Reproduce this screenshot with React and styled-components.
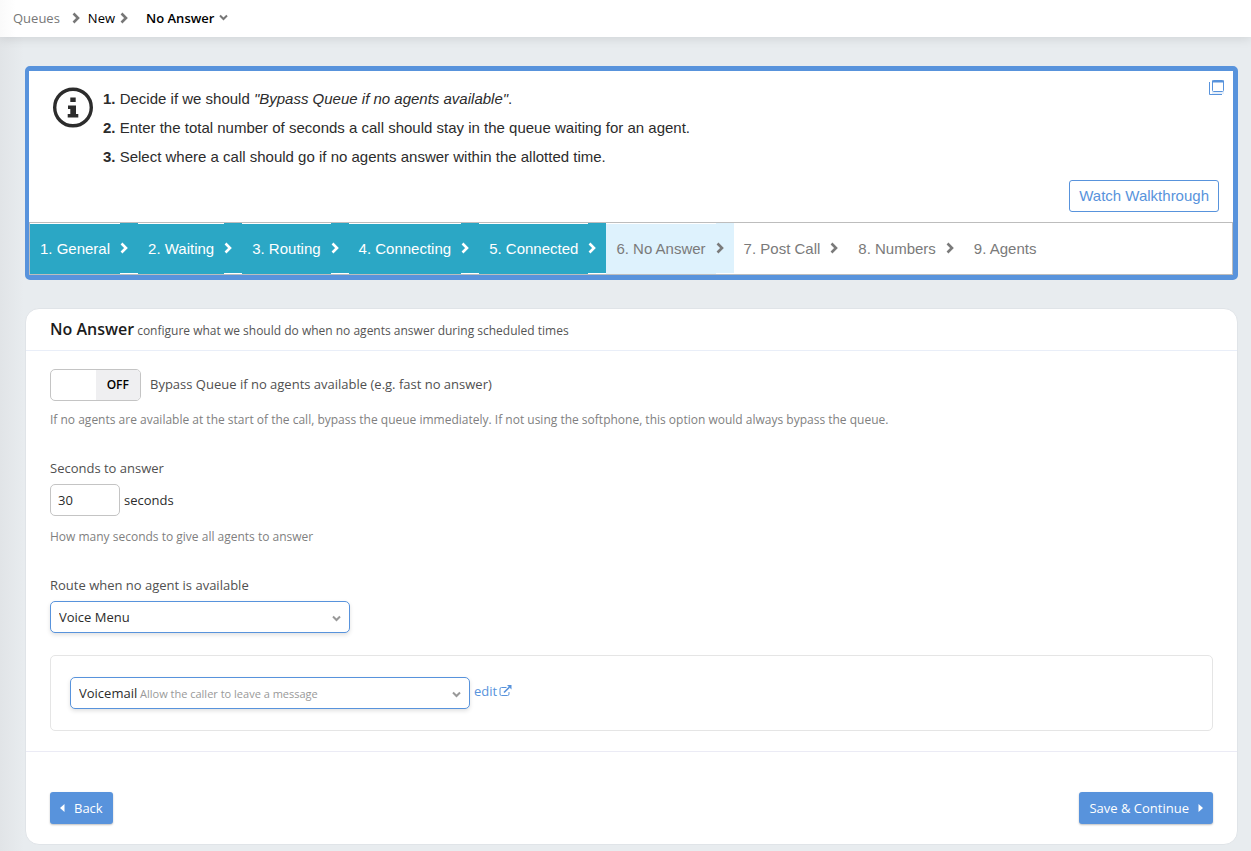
import React, { useState } from "react";
import styled, { createGlobalStyle } from "styled-components";

const blue = "#5893dc";
const teal = "#2ba7c5";
const sans = '"Open Sans", "Noto Sans", sans-serif';
const helvetica = '"Liberation Sans", Arial, sans-serif';

const GlobalStyle = createGlobalStyle`
  *, *::before, *::after { box-sizing: border-box; }
  body {
    margin: 0;
    font: 13px/20px ${sans};
    color: #2c2c2c;
    background: linear-gradient(90deg, #e1e4e7 0, #e8ecef 24px);
  }
  input, select, button { font: inherit; color: inherit; }
  h1, p, ol { margin: 0; }
`;

const Page = styled.div`
  min-height: 100vh;
  padding-bottom: 6px;
`;

const TopBar = styled.nav`
  display: flex;
  align-items: center;
  height: 37px;
  padding: 0 13px 2px;
  background: linear-gradient(90deg, #fafafa 0, #fff 16px);
  box-shadow: 0 1px 12px rgba(0, 0, 0, 0.12);
`;

const Crumb = styled.a`
  color: #777;
  text-decoration: none;
`;

const NewCrumb = styled(Crumb)`
  color: #000;
  font-weight: 500;
  margin: 0 5px 0 7px;
`;

const CurrentCrumb = styled.button`
  display: flex;
  align-items: center;
  gap: 5px;
  margin-left: 17px;
  padding: 0;
  border: 0;
  background: none;
  color: #000;
  font-weight: 600;
`;

const CrumbArrow = styled.span`
  display: flex;
  margin-left: ${(p) => p.$gap || 0}px;
  color: #777;
`;

const Main = styled.main`
  padding: 29px 13px 0 25px;
`;

const Guide = styled.section`
  border: solid ${blue};
  border-width: 5px 5px 5px 4px;
  border-radius: 5px;
  background: #fff;
  font-family: ${helvetica};
  font-size: 15px;
`;

const GuideBody = styled.div`
  display: flex;
  align-items: flex-start;
  gap: 10px;
  padding: 13px 9px 0 24px;
`;

const InfoMark = styled.svg`
  flex: none;
  margin-top: 3px;
`;

const GuideList = styled.ol`
  flex: 1;
  padding: 0;
  list-style: none;
  line-height: 29px;
`;

const IconButton = styled.button`
  display: flex;
  margin-top: -4px;
  padding: 0;
  border: 0;
  background: none;
  color: ${blue};
`;

const GuideActions = styled.div`
  display: flex;
  justify-content: flex-end;
  padding: 9px 14px 10px;
`;

const OutlineButton = styled.button`
  height: 32px;
  padding: 0 9px;
  border: 1px solid ${blue};
  border-radius: 3px;
  background: #fff;
  color: ${blue};
`;

const Steps = styled.ol`
  display: flex;
  padding: 0;
  list-style: none;
  border: 1px solid #bdbdbd;
  height: 53px;
`;

const tones = {
  done: { back: teal, ink: "#fff" },
  current: { back: "#def2fd", ink: "#7a7a7a" },
  todo: { back: "transparent", ink: "#7a7a7a" },
};

const StepItem = styled.li`
  display: flex;
  color: ${(p) => tones[p.$tone].ink};
`;

const StepLink = styled.a`
  display: flex;
  align-items: center;
  height: 50px;
  margin-top: 1px;
  padding: 0 10px;
  color: inherit;
  text-decoration: none;
  background: ${(p) => tones[p.$tone].back};
`;

const StepArrow = styled.span`
  display: flex;
  align-items: center;
  width: 18px;
  height: 50px;
  background: ${(p) => tones[p.$tone].back};
`;

const Card = styled.form`
  margin-top: 28px;
  border: 1px solid #e0e4e8;
  border-radius: 14px;
  background: #fff;
`;

const CardHeader = styled.header`
  display: flex;
  align-items: baseline;
  gap: 3px;
  height: 42px;
  padding: 8px 24px 0;
  border-bottom: 1px solid #e9eef8;
  font-size: 12px;
  line-height: 24px;
  color: #555;
`;

const Title = styled.h1`
  font-size: 16px;
  font-weight: 600;
  color: #1c1c1c;
`;

const CardBody = styled.div`
  padding: 18px 24px 20px;
`;

const Help = styled.p`
  font-size: 12px;
  color: #7f7f7f;
`;

const HelpBelow = styled(Help)`
  margin-top: 5px;
`;

const Field = styled.div`
  display: flex;
  flex-direction: column;
  gap: ${(p) => p.$gap || 6}px;
  margin-bottom: ${(p) => p.$after}px;
`;

const FieldLabel = styled.label`
  color: #505050;
`;

const Row = styled.div`
  display: flex;
  align-items: center;
  gap: 4px;
`;

const SwitchLabel = styled.label`
  display: flex;
  align-items: center;
  gap: 9px;
  color: #505050;
`;

const SwitchInput = styled.input`
  position: absolute;
  opacity: 0;
`;

const SwitchTrack = styled.span`
  display: grid;
  grid-template-columns: 1fr 1fr;
  width: 91px;
  height: 32px;
  border: 1px solid #c4c4c4;
  border-radius: 5px;
  overflow: hidden;
  background: #fff;
`;

const SwitchText = styled.span`
  grid-column: ${(p) => (p.$on ? 1 : 2)};
  background: ${(p) => (p.$on ? blue : "#efeff1")};
  color: ${(p) => (p.$on ? "#fff" : "#000")};
  font-size: 12px;
  font-weight: 600;
  line-height: 30px;
  text-align: center;
`;

const SwitchCaption = styled.span`
  padding-bottom: 2px;
`;

const NumberBox = styled.input`
  width: 70px;
  height: 32px;
  padding: 0 7px;
  border: 1px solid #c4c4c4;
  border-radius: 5px;
  background: #fff;
`;

const SelectWrap = styled.div`
  position: relative;
  width: ${(p) => p.$width}px;
  max-width: 100%;
  color: #999;
`;

const SelectBox = styled.select`
  display: block;
  width: 100%;
  height: 32px;
  padding: 0 28px 0 8px;
  appearance: none;
  border: 1px solid ${blue};
  border-radius: 5px;
  background: #fff;
  color: #2c2c2c;
  box-shadow: 0 2px 4px rgba(0, 0, 0, 0.12);
`;

const SelectArrow = styled.span`
  position: absolute;
  display: flex;
  top: 14px;
  right: 9px;
  pointer-events: none;
`;

const SelectHint = styled.span`
  position: absolute;
  top: 7px;
  left: 70px;
  font-size: 11px;
  pointer-events: none;
`;

const RouteBox = styled.div`
  display: flex;
  align-items: flex-start;
  gap: 4px;
  padding: 21px 19px;
  border: 1px solid #e5e5e5;
  border-radius: 5px;
`;

const EditLink = styled.a`
  display: flex;
  align-items: center;
  gap: 2px;
  margin-top: 4px;
  color: ${blue};
  text-decoration: none;
`;

const CardFooter = styled.footer`
  display: flex;
  justify-content: space-between;
  padding: 40px 24px 20px;
  border-top: 1px solid #ebebf5;
`;

const SolidButton = styled.button`
  display: flex;
  align-items: center;
  gap: 9px;
  height: 32px;
  padding: 0 10px;
  border: 0;
  border-radius: 3px;
  background: ${blue};
  color: #fff;
  box-shadow: 0 1px 2px rgba(0, 0, 0, 0.25);
`;

const Chevron = () => (
  <svg width="9" height="12" viewBox="0 0 9 12" fill="none" stroke="currentColor" strokeWidth="2.6" aria-hidden="true">
    <path d="M1.500 1.500 6 6l-4.500 4.500" />
  </svg>
);

const CaretDown = () => (
  <svg width="9" height="7" viewBox="0 0 9 7" fill="none" stroke="currentColor" strokeWidth="2" aria-hidden="true">
    <path d="M1 1.500 4.500 5 8 1.500" />
  </svg>
);

const InfoIcon = () => (
  <InfoMark width="40" height="41" viewBox="0 0 40 41" fill="#2c2c2c" aria-hidden="true">
    <circle cx="20" cy="20.500" r="18.300" fill="none" stroke="#2c2c2c" strokeWidth="3.400" />
    <rect x="17.300" y="10.500" width="5.400" height="4.500" />
    <path d="M15 18.500h8v8.500h2.300v3.500H14.700V27h2.600v-5H15z" />
  </InfoMark>
);

const WindowIcon = () => (
  <svg width="15" height="15" viewBox="0 0 15 15" fill="none" stroke="currentColor" aria-hidden="true">
    <path d="M.5 2v12.500H13" />
    <rect x="3.500" y=".5" width="11" height="11" rx="1" />
    <path d="M3 1.500h12" strokeWidth="2" />
    <path d="M3 13h12" opacity=".3" />
  </svg>
);

const ExternalIcon = () => (
  <svg width="13" height="12" viewBox="0 0 13 12" fill="none" stroke="currentColor" aria-hidden="true">
    <path d="M7.500 2.500H2.500a1.500 1.500 0 0 0-1.500 1.500v5a1.500 1.500 0 0 0 1.500 1.500h6A1.500 1.500 0 0 0 10 9V7" />
    <path d="M5 7.500 10.500 2" strokeWidth="1.600" />
    <path d="M8 0h4.500v4.500z" fill="currentColor" stroke="none" />
  </svg>
);

const Triangle = ({ left }) => (
  <svg width="5" height="8" viewBox="0 0 5 8" fill="currentColor" aria-hidden="true">
    <path d={left ? "M4.500 0v8L0 4z" : "M.5 0v8L5 4z"} />
  </svg>
);

const steps = [
  ["1. General", "done"],
  ["2. Waiting", "done"],
  ["3. Routing", "done"],
  ["4. Connecting", "done"],
  ["5. Connected", "done"],
  ["6. No Answer", "current"],
  ["7. Post Call", "todo"],
  ["8. Numbers", "todo"],
  ["9. Agents", "todo"],
];

export default function App() {
  const [bypass, setBypass] = useState(false);
  return (
    <Page>
      <GlobalStyle />
      <TopBar aria-label="Breadcrumb">
        <Crumb href="#queues">Queues</Crumb>
        <CrumbArrow $gap={12}><Chevron /></CrumbArrow>
        <NewCrumb href="#new">New</NewCrumb>
        <CrumbArrow><Chevron /></CrumbArrow>
        <CurrentCrumb type="button">No Answer <CrumbArrow><CaretDown /></CrumbArrow></CurrentCrumb>
      </TopBar>
      <Main>
        <Guide>
          <GuideBody>
            <InfoIcon />
            <GuideList>
              <li><b>1.</b> Decide if we should <em>"Bypass Queue if no agents available"</em>.</li>
              <li><b>2.</b> Enter the total number of seconds a call should stay in the queue waiting for an agent.</li>
              <li><b>3.</b> Select where a call should go if no agents answer within the allotted time.</li>
            </GuideList>
            <IconButton type="button" aria-label="Open in window"><WindowIcon /></IconButton>
          </GuideBody>
          <GuideActions>
            <OutlineButton type="button">Watch Walkthrough</OutlineButton>
          </GuideActions>
          <Steps>
            {steps.map(([name, tone], i) => (
              <StepItem key={name} $tone={tone}>
                <StepLink href={`#step-${i + 1}`} $tone={tone}>{name}</StepLink>
                {i < steps.length - 1 && <StepArrow $tone={tone}><Chevron /></StepArrow>}
              </StepItem>
            ))}
          </Steps>
        </Guide>
        <Card onSubmit={(e) => e.preventDefault()}>
          <CardHeader>
            <Title>No Answer</Title>
            <span>configure what we should do when no agents answer during scheduled times</span>
          </CardHeader>
          <CardBody>
            <Field $gap={9} $after={28}>
              <SwitchLabel>
                <SwitchInput type="checkbox" checked={bypass} onChange={(e) => setBypass(e.target.checked)} />
                <SwitchTrack><SwitchText $on={bypass}>{bypass ? "ON" : "OFF"}</SwitchText></SwitchTrack>
                <SwitchCaption>Bypass Queue if no agents available (e.g. fast no answer)</SwitchCaption>
              </SwitchLabel>
              <Help>If no agents are available at the start of the call, bypass the queue immediately. If not using the softphone, this option would always bypass the queue.</Help>
            </Field>
            <Field $after={28}>
              <FieldLabel htmlFor="seconds">Seconds to answer</FieldLabel>
              <Row>
                <NumberBox id="seconds" type="text" inputMode="numeric" defaultValue="30" />
                seconds
              </Row>
              <HelpBelow>How many seconds to give all agents to answer</HelpBelow>
            </Field>
            <Field $after={22}>
              <FieldLabel htmlFor="route">Route when no agent is available</FieldLabel>
              <SelectWrap $width={300}>
                <SelectBox id="route"><option>Voice Menu</option></SelectBox>
                <SelectArrow><CaretDown /></SelectArrow>
              </SelectWrap>
            </Field>
            <RouteBox>
              <SelectWrap $width={400}>
                <SelectBox aria-label="Voice menu"><option>Voicemail</option></SelectBox>
                <SelectHint>Allow the caller to leave a message</SelectHint>
                <SelectArrow><CaretDown /></SelectArrow>
              </SelectWrap>
              <EditLink href="#edit">edit <ExternalIcon /></EditLink>
            </RouteBox>
          </CardBody>
          <CardFooter>
            <SolidButton type="button"><Triangle left />Back</SolidButton>
            <SolidButton type="submit">Save &amp; Continue<Triangle /></SolidButton>
          </CardFooter>
        </Card>
      </Main>
    </Page>
  );
}
